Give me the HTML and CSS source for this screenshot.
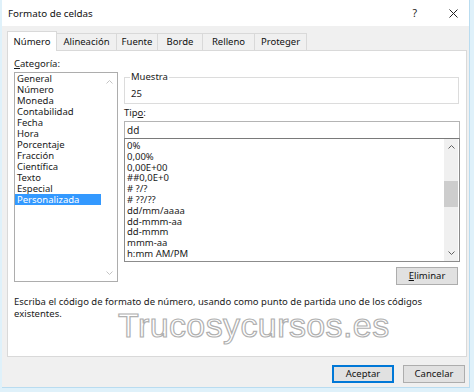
FILE: index.html
```html
<!DOCTYPE html>
<html lang="es">
<head>
<meta charset="utf-8">
<title>Formato de celdas</title>
<link rel="stylesheet" href="styles.css">
</head>
<body>
<div class="window">
  <div class="titlebar">
    <span class="title">Formato de celdas</span>
    <span class="help">?</span>
    <svg class="close" width="9" height="9" viewBox="0 0 9 9"><path d="M0.5 0.5 L8.5 8.5 M8.5 0.5 L0.5 8.5" stroke="#222" stroke-width="1" fill="none"/></svg>
  </div>

  <div class="tabs">
    <div class="tab active w50">Número</div>
    <div class="tab w61">Alineación</div>
    <div class="tab w42">Fuente</div>
    <div class="tab w46">Borde</div>
    <div class="tab w53">Relleno</div>
    <div class="tab w53">Proteger</div>
  </div>

  <div class="panel">
    <div class="main">
      <div class="leftcol">
        <div class="label"><u>C</u>ategoría:</div>
        <div class="catlist">
          <div class="items">
            <div class="item">General</div>
            <div class="item">Número</div>
            <div class="item">Moneda</div>
            <div class="item">Contabilidad</div>
            <div class="item">Fecha</div>
            <div class="item">Hora</div>
            <div class="item">Porcentaje</div>
            <div class="item">Fracción</div>
            <div class="item">Científica</div>
            <div class="item">Texto</div>
            <div class="item">Especial</div>
            <div class="item selected">Personalizada</div>
          </div>
          <div class="vscroll disabled">
            <svg class="arrow" width="7" height="4" viewBox="0 0 7 4"><path d="M0.5 3.5 L3.5 0.5 L6.5 3.5" stroke="#c4c4c4" fill="none"/></svg>
            <svg class="arrow" width="7" height="4" viewBox="0 0 7 4"><path d="M0.5 0.5 L3.5 3.5 L6.5 0.5" stroke="#c4c4c4" fill="none"/></svg>
          </div>
        </div>
      </div>

      <div class="rightcol">
        <fieldset class="sample">
          <legend>Muestra</legend>
          <div class="sampleval">25</div>
        </fieldset>
        <div class="tipo">Tip<u>o</u>:</div>
        <div class="input">dd</div>
        <div class="fmtlist">
          <div class="fmtitems">
            <div class="fitem">0%</div>
            <div class="fitem">0,00%</div>
            <div class="fitem">0,00E+00</div>
            <div class="fitem">##0,0E+0</div>
            <div class="fitem"># ?/?</div>
            <div class="fitem"># ??/??</div>
            <div class="fitem">dd/mm/aaaa</div>
            <div class="fitem">dd-mmm-aa</div>
            <div class="fitem">dd-mmm</div>
            <div class="fitem">mmm-aa</div>
            <div class="fitem">h:mm AM/PM</div>
          </div>
          <div class="vscroll active">
            <svg class="arrow" width="7" height="4" viewBox="0 0 7 4"><path d="M0.5 3.5 L3.5 0.5 L6.5 3.5" stroke="#606060" fill="none"/></svg>
            <div class="thumb"></div>
            <svg class="arrow" width="7" height="4" viewBox="0 0 7 4"><path d="M0.5 0.5 L3.5 3.5 L6.5 0.5" stroke="#606060" fill="none"/></svg>
          </div>
        </div>
        <div class="elimrow">
          <button class="btn elim"><u>E</u>liminar</button>
        </div>
      </div>
    </div>
    <p class="desc">Escriba el código de formato de número, usando como punto de partida uno de los códigos existentes.</p>
  </div>

  <div class="buttons">
    <button class="btn default">Aceptar</button>
    <button class="btn">Cancelar</button>
  </div>

  <div class="watermark">Trucosycursos.es</div>
</div>
</body>
</html>
```

FILE: styles.css
```css
* { box-sizing: border-box; }

html, body {
  margin: 0;
  padding: 0;
}

body {
  background: #dff1fa;
  font-family: "Noto Sans", "Open Sans", sans-serif;
  font-size: 9.5px;
  color: #1a1a1a;
  width: 474px;
  height: 392px;
  overflow: hidden;
}

.window {
  position: relative;
  margin-left: 2px;
  width: 468px;
  height: 388px;
  background: #f0f0f0;
  border-right: 1px solid #b9dcf0;
  border-bottom: 1px solid #b9dcf0;
}

.titlebar {
  height: 26px;
  background: #ffffff;
  display: flex;
  align-items: center;
  padding-left: 6px;
}

.title {
  font-size: 9.8px;
  color: #111;
  flex: 1;
}

.help {
  font-size: 10.5px;
  color: #222;
  margin-right: 32px;
}

.close {
  margin-right: 11px;
}

.tabs {
  display: flex;
  align-items: flex-end;
  margin-top: 5px;
  margin-left: 5px;
  height: 19px;
  position: relative;
  z-index: 1;
}

.tab {
  height: 17px;
  line-height: 16px;
  text-align: center;
  border: 1px solid #d9d9d9;
  border-bottom: none;
  background: #f0f0f0;
  margin-left: -1px;
  color: #111;
}

.tab.active {
  margin-left: 0;
  height: 20px;
  line-height: 20px;
  margin-bottom: -1px;
  background: #ffffff;
}

.w50 { width: 50px; }
.w61 { width: 61px; }
.w42 { width: 42px; }
.w46 { width: 46px; }
.w53 { width: 53px; }

.panel {
  margin-left: 5px;
  width: 460px;
  height: 307px;
  background: #ffffff;
  border: 1px solid #d9d9d9;
  padding: 6px 5px 0 6px;
}

.main {
  display: flex;
  gap: 6px;
}

.leftcol {
  width: 104px;
  flex: none;
}

.label {
  height: 15px;
  line-height: 14px;
}

.catlist {
  height: 210px;
  border: 1px solid #adadad;
  display: flex;
}

.items {
  flex: 1;
  padding-top: 0;
}

.item {
  height: 11px;
  line-height: 11px;
  padding-left: 2px;
  white-space: nowrap;
}

.item.selected {
  background: #3399ff;
  color: #ffffff;
}

.vscroll {
  width: 16px;
  flex: none;
  display: flex;
  flex-direction: column;
  align-items: center;
  justify-content: space-between;
  padding: 7px 0 6px;
}

.vscroll.active {
  width: 14px;
  background: #f0f0f0;
  padding: 6px 0 6px;
  margin-right: 1px;
}

.thumb {
  width: 14px;
  height: 26px;
  background: #cdcdcd;
  margin-top: 32px;
  margin-bottom: auto;
}

.rightcol {
  flex: 1;
  padding-top: 13px;
  padding-right: 1px;
}

.sample {
  margin: 0;
  padding: 3px 6px 2px 6px;
  border: 1px solid #dcdcdc;
  height: 34px;
  width: 335px;
}

.sample legend {
  padding: 0 1px;
  line-height: 14px;
  margin-left: -1px;
}

.sampleval {
  line-height: 14px;
}

.tipo {
  height: 17px;
  line-height: 17px;
}

.input {
  height: 17px;
  line-height: 16px;
  border: 1px solid #b4b4b4;
  border-bottom: none;
  padding-left: 2px;
  font-size: 10px;
}

.fmtlist {
  height: 124px;
  border: 1px solid #8c8c8c;
  border-top: 1px solid #7a7a7a;
  display: flex;
}

.fmtitems {
  flex: 1;
  padding-top: 2px;
  padding-left: 2px;
}

.fitem {
  height: 10.8px;
  line-height: 10.8px;
  white-space: nowrap;
}

.elimrow {
  display: flex;
  justify-content: flex-end;
  margin-top: 5px;
  padding-right: 2px;
}

.btn {
  font-family: "Noto Sans", "Open Sans", sans-serif;
  font-size: 9.5px;
  color: #111;
  height: 18px;
  width: 62px;
  padding: 0;
  background: #e1e1e1;
  border: 1px solid #adadad;
  line-height: 16px;
}

.desc {
  margin: 11px 0 0 0;
  line-height: 11.5px;
  width: 420px;
}

.buttons {
  display: flex;
  justify-content: flex-end;
  gap: 9px;
  margin-top: 8px;
  padding-right: 4px;
}

.btn.default {
  border: 1px solid #0078d7;
  box-shadow: inset 0 0 0 1px #0078d7;
}

.watermark {
  position: absolute;
  left: 116px;
  top: 308px;
  font-family: "Liberation Sans", Arial, sans-serif;
  font-size: 34px;
  line-height: 34px;
  color: rgba(255, 255, 255, 0.85);
  -webkit-text-stroke: 1.2px #b0b0b0;
  letter-spacing: 0.4px;
  white-space: nowrap;
}
```
